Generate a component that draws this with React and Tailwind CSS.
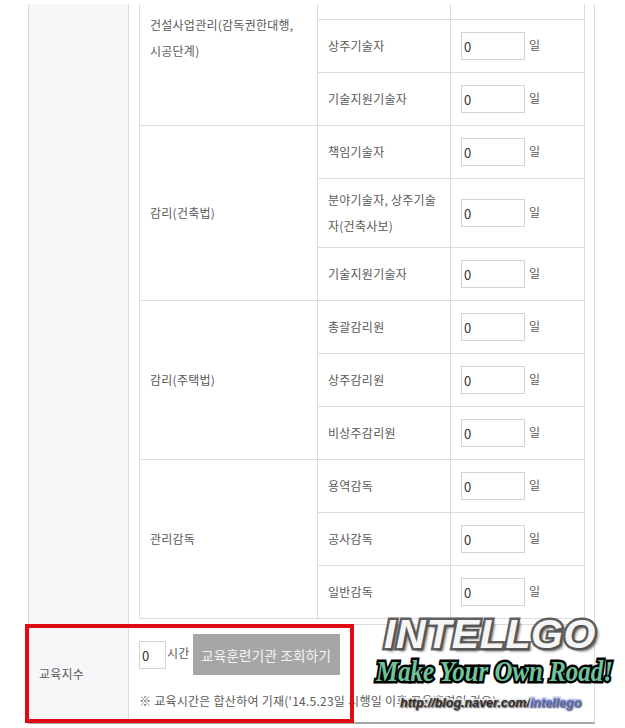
const font = { fontFamily: '"Noto Sans CJK KR", "Liberation Sans", sans-serif' };

const groups = [
  { name: ["건설사업관리(감독권한대행,", "시공단계)"], rows: ["분야기술자, 상주기술자", "상주기술자", "기술지원기술자"] },
  { name: ["감리(건축법)"], rows: ["책임기술자", "분야기술자, 상주기술자(건축사보)", "기술지원기술자"] },
  { name: ["감리(주택법)"], rows: ["총괄감리원", "상주감리원", "비상주감리원"] },
  { name: ["관리감독"], rows: ["용역감독", "공사감독", "일반감독"] },
];

function DayCell() {
  return (
    <td className="border-t border-l border-[#dcdce0] pl-[10px] align-middle">
      <div className="flex items-center gap-1">
        <input readOnly value="0" className="h-[28px] w-[64px] border border-[#d4d4d4] bg-white pl-[2px] text-[13px] text-[#333] outline-none" />
        <span className="-mt-[3px] text-[#5a5a5a]">일</span>
      </div>
    </td>
  );
}

export default function App() {
  return (
    <div className="relative h-[728px] w-[625px] overflow-hidden bg-white text-[12px] leading-[26px] tracking-[0.25px] text-[#5a5a5a]" style={font}>
      <div className="ml-[28px] mt-[4px] flex h-[720px] w-[567px] flex-col overflow-hidden border-x border-b-2 border-x-[#dcdce0] border-b-[#a8a8a8]">
        <div className="flex h-[620px] shrink-0">
          <div className="w-[100px] shrink-0 border-r border-[#dcdce0] bg-[#f7f7f9]" />
          <div className="flex-1 px-[10px]">
            <table className="-mt-[54px] w-[445px] table-fixed border-collapse border-x border-b border-[#dcdce0]">
              <colgroup>
                <col className="w-[178px]" />
                <col className="w-[133px]" />
                <col className="w-[134px]" />
              </colgroup>
              <tbody>
                {groups.map((g) =>
                  g.rows.map((r, i) => (
                    <tr key={r + i} className={r.includes(",") ? "h-[69px]" : "h-[53px]"}>
                      {i === 0 && (
                        <td rowSpan={3} className="border-t border-[#dcdce0] px-[10px] align-middle">
                          {g.name.map((n) => (
                            <div key={n} className="whitespace-nowrap">{n}</div>
                          ))}
                        </td>
                      )}
                      <td className="border-t border-l border-[#dcdce0] px-[10px] align-middle">{r}</td>
                      <DayCell />
                    </tr>
                  ))
                )}
              </tbody>
            </table>
          </div>
        </div>
        <div className="flex flex-1 border-t border-[#dcdce0]">
          <div className="flex w-[100px] shrink-0 items-center border-r border-[#dcdce0] bg-[#f7f7f9] pl-[10px]">교육지수</div>
          <div className="min-w-0 flex-1 pl-[10px] pt-[9px]">
            <div className="flex items-end">
              <input readOnly value="0" className="mb-[6px] h-[28px] w-[27px] border border-[#d4d4d4] bg-white pl-[2px] text-[13px] text-[#333] outline-none" />
              <span className="mb-[9px] ml-[1px]">시간</span>
              <div className="ml-[3px] flex h-[41px] w-[147px] items-center justify-center bg-[#a6a6a6] text-[13.5px] text-[#f4f4f4]">교육훈련기관 조회하기</div>
            </div>
            <div className="mt-[13px] whitespace-nowrap">※ 교육시간은 합산하여 기재('14.5.23일 시행일 이후 교육훈련인 경우)</div>
          </div>
        </div>
      </div>

      <div className="absolute left-[25px] top-[624px] h-[99px] w-[329px] border-[4px] border-[#e00a14]" />

      <div className="absolute left-[384px] top-[611px] whitespace-nowrap text-[41px] leading-[46px] font-bold italic tracking-[0.6px] text-[#f6f5f5] [-webkit-text-stroke:5px_#5f5f5f] [paint-order:stroke_fill] [text-shadow:3px_3px_3px_#555]" style={{ fontFamily: '"Liberation Sans", sans-serif' }}>INTELLGO</div>
      <div className="absolute left-[376px] top-[655px] origin-left scale-x-[0.83] whitespace-nowrap text-[30px] leading-[32px] font-bold italic tracking-normal text-[#6cc39c] [-webkit-text-stroke:5px_#000] [paint-order:stroke_fill]" style={{ fontFamily: '"Liberation Serif", serif' }}>Make Your Own Road!</div>
      <div className="absolute left-[400px] top-[693px] whitespace-nowrap text-[12.5px] leading-[20px] font-bold italic tracking-normal text-[#2e2e2e] [-webkit-text-stroke:3px_#e8e8e8] [paint-order:stroke_fill] [text-shadow:1px_1px_1px_#666]" style={{ fontFamily: '"Liberation Sans", sans-serif' }}>
        http://blog.naver.com/<span className="text-[#5a6fc0] [-webkit-text-stroke:3px_#c9cdea]">intellego</span>
      </div>
    </div>
  );
}
